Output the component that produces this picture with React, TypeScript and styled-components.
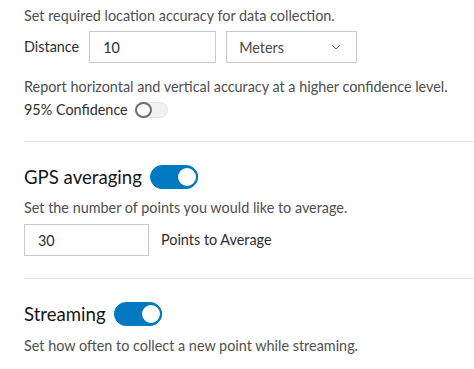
import React, { useState } from "react";
import styled, { createGlobalStyle } from "styled-components";

const GlobalStyle = createGlobalStyle`
  html, body {
    margin: 0;
    padding: 0;
    background: #ffffff;
  }
  body {
    font-family: "Lato", "Open Sans", sans-serif;
    color: #4a4a4a;
  }
`;

const Page = styled.div`
  width: 474px;
  height: 369px;
  overflow: hidden;
  padding-top: 6px;
  box-sizing: border-box;
`;

const Section = styled.div`
  padding-left: 24px;
`;

const Hint = styled.p<{ $mt?: number }>`
  margin: ${(p) => p.$mt ?? 0}px 0 0 0;
  font-size: 14.4px;
  line-height: 20px;
  color: #4f4f4f;
  white-space: nowrap;
`;

const Row = styled.div<{ $mt?: number; $gap?: number }>`
  display: flex;
  align-items: center;
  gap: ${(p) => p.$gap ?? 12}px;
  margin-top: ${(p) => p.$mt ?? 0}px;
`;

const Label = styled.span`
  font-size: 14.4px;
  line-height: 20px;
  color: #2e2e2e;
  white-space: nowrap;
`;

const Heading = styled.h3`
  margin: 0;
  font-size: 18.6px;
  font-weight: 400;
  line-height: 24px;
  color: #151515;
`;

const TextBox = styled.div<{ $w: number }>`
  width: ${(p) => p.$w}px;
  height: 32px;
  box-sizing: border-box;
  border: 1px solid #cacaca;
  display: flex;
  align-items: center;
  padding-left: 13px;
  font-size: 14.4px;
  color: #2e2e2e;
`;

const Select = styled(TextBox)`
  justify-content: space-between;
  padding: 0 15px 0 12px;
  color: #4a4a4a;
`;

const Divider = styled.hr<{ $mt: number }>`
  margin: ${(p) => p.$mt}px 0 0 24px;
  border: none;
  border-top: 1px solid #e6e6e6;
  height: 0;
`;

const Track = styled.button<{ $on: boolean; $small?: boolean }>`
  position: relative;
  padding: 0;
  cursor: pointer;
  box-sizing: border-box;
  width: ${(p) => (p.$small ? 33 : 48)}px;
  height: ${(p) => (p.$small ? 16 : 24)}px;
  border-radius: 999px;
  border: 1px solid ${(p) => (p.$on ? "#0079c1" : "#e4e4e4")};
  background: ${(p) => (p.$on ? "#0079c1" : "#f1f1f1")};
`;

const Knob = styled.span<{ $on: boolean; $small?: boolean }>`
  position: absolute;
  top: 50%;
  transform: translateY(-50%);
  box-sizing: border-box;
  width: ${(p) => (p.$small ? 17 : 22)}px;
  height: ${(p) => (p.$small ? 16 : 22)}px;
  border-radius: 50%;
  background: #ffffff;
  border: ${(p) => (p.$on ? "2px solid #0079c1" : "2px solid #6e6e6e")};
  ${(p) => (p.$on ? "right: -1px;" : "left: -1px;")}
`;

function Toggle({ initial, small }: { initial: boolean; small?: boolean }) {
  const [on, setOn] = useState(initial);
  return (
    <Track $on={on} $small={small} onClick={() => setOn(!on)}>
      <Knob $on={on} $small={small} />
    </Track>
  );
}

export default function App() {
  return (
    <>
      <GlobalStyle />
      <Page>
        <Section>
          <Hint>Set required location accuracy for data collection.</Hint>
          <Row $mt={5} $gap={10}>
            <Label>Distance</Label>
            <TextBox $w={127}>10</TextBox>
            <Select $w={131}>
              <span>Meters</span>
              <svg width="10" height="6" viewBox="0 0 10 6">
                <path d="M1 1l4 4 4-4" fill="none" stroke="#6a6a6a" strokeWidth="1" />
              </svg>
            </Select>
          </Row>
          <Hint $mt={14}>Report horizontal and vertical accuracy at a higher confidence level.</Hint>
          <Row $mt={3} $gap={7}>
            <Label>95% Confidence</Label>
            <Toggle initial={false} small />
          </Row>
        </Section>
        <Divider $mt={21} />
        <Section>
          <Row $mt={23} $gap={8}>
            <Heading>GPS averaging</Heading>
            <Toggle initial />
          </Row>
          <Hint $mt={9}>Set the number of points you would like to average.</Hint>
          <Row $mt={6}>
            <TextBox $w={125}>30</TextBox>
            <Label>Points to Average</Label>
          </Row>
        </Section>
        <Divider $mt={22} />
        <Section>
          <Row $mt={23} $gap={8}>
            <Heading>Streaming</Heading>
            <Toggle initial />
          </Row>
          <Hint $mt={10}>Set how often to collect a new point while streaming.</Hint>
        </Section>
      </Page>
    </>
  );
}
